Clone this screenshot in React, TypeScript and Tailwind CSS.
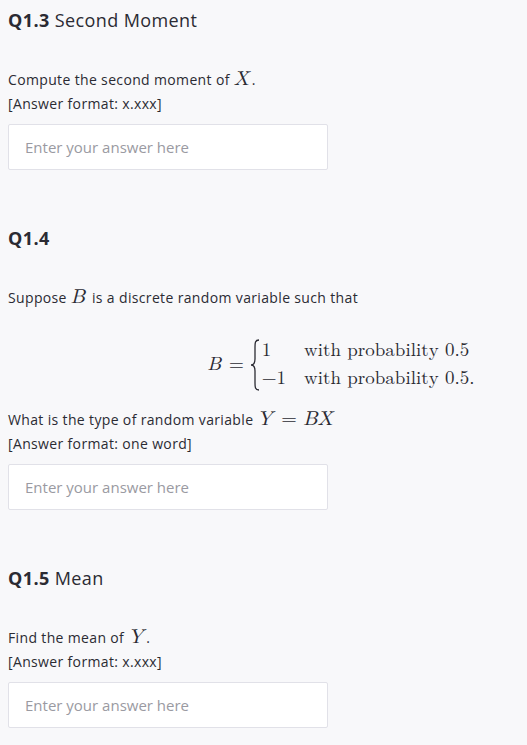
import React from "react";

const sans = "font-['Open_Sans','Lato',sans-serif]";
const mathFont = "font-['Latin_Modern_Math','Liberation_Serif','DejaVu_Serif',serif]";

function V({ children }: { children: React.ReactNode }) {
  return <span className={`${mathFont} italic text-[20px] leading-none tracking-normal pr-[3px]`}>{children}</span>;
}

function Input() {
  return (
    <div className="w-[320px] h-[46px] bg-white border border-[#e1e1e8] rounded-[2px] flex items-center px-4">
      <span className="text-[15px] text-[#9a9aa2]">Enter your answer here</span>
    </div>
  );
}

const body = "text-[14px] leading-[24px] tracking-[0.35px]";
const head = "text-[18px] leading-[24px] tracking-[0.4px]";

export default function App() {
  return (
    <div className={`${sans} bg-[#f8f8fa] min-h-[745px] w-[527px] px-2 text-[#2b2b33]`}>
      <div className="pt-[8px]">
        <h2 className={head}>
          <b>Q1.3</b> Second Moment
        </h2>
        <div className={`mt-[36px] ${body}`}>
          Compute the second moment of <V>X</V>.
        </div>
        <div className={body}>[Answer format: x.xxx]</div>
        <div className="mt-[8px]">
          <Input />
        </div>
      </div>

      <div className="mt-[56px]">
        <h2 className={head}>
          <b>Q1.4</b>
        </h2>
        <div className={`mt-[36px] ${body}`}>
          Suppose <V>B</V> is a discrete random variable such that
        </div>
        <div className={`${mathFont} mt-[27px] flex items-center justify-center pl-[155px] text-[19px] h-[56px]`}>
          <span className="italic pr-[2px]">B</span>
          <span className="mx-[6px]">=</span>
          <svg width="10" height="52" viewBox="0 0 10 52" className="mr-[2px]">
            <path d="M9 1 C5 1 5 4 5 8 L5 20 C5 24 4 26 1 26 C4 26 5 28 5 32 L5 44 C5 48 5 51 9 51" fill="none" stroke="#2b2b33" strokeWidth="1.3" />
          </svg>
          <div className="grid grid-cols-[auto_auto] gap-x-[18px] leading-[28px]">
            <span>1</span>
            <span>with probability 0.5</span>
            <span>−1</span>
            <span>with probability 0.5.</span>
          </div>
        </div>
        <div className={`mt-[14px] ${body}`}>
          What is the type of random variable <V>Y</V>
          <span className={`${mathFont} text-[20px] mx-[6px]`}>=</span>
          <V>BX</V>
        </div>
        <div className={body}>[Answer format: one word]</div>
        <div className="mt-[8px]">
          <Input />
        </div>
      </div>

      <div className="mt-[56px]">
        <h2 className={head}>
          <b>Q1.5</b> Mean
        </h2>
        <div className={`mt-[36px] ${body}`}>
          Find the mean of <V>Y</V>.
        </div>
        <div className={body}>[Answer format: x.xxx]</div>
        <div className="mt-[8px]">
          <Input />
        </div>
      </div>
    </div>
  );
}
